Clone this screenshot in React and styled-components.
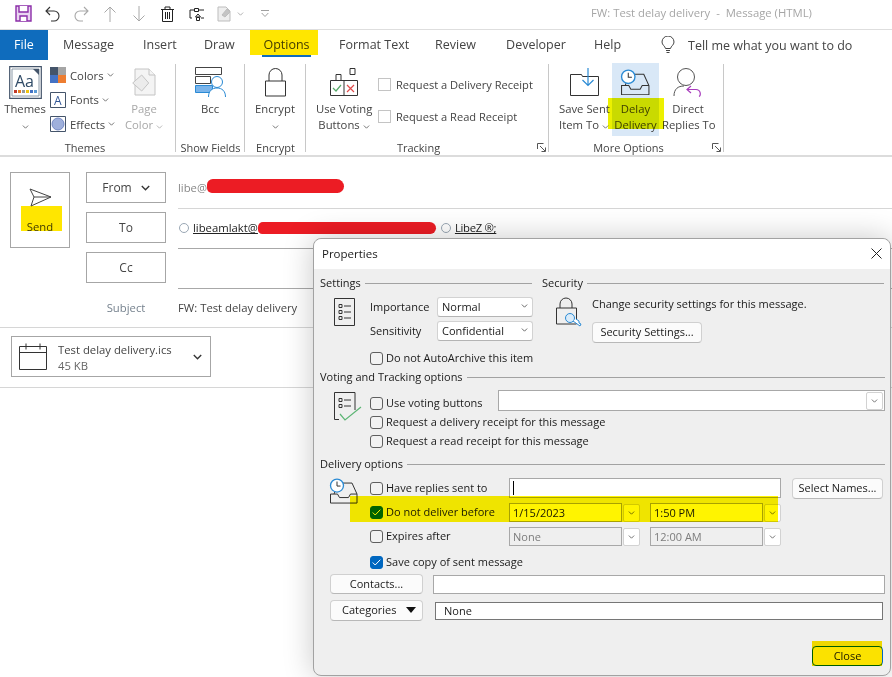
import React from "react";
import styled, { createGlobalStyle } from "styled-components";

const GlobalStyle = createGlobalStyle`
  html, body { margin: 0; padding: 0; background: #fff; }
  * { box-sizing: border-box; }
`;

const Page = styled.div`
  position: relative;
  width: 892px;
  height: 677px;
  overflow: hidden;
  background: #fff;
  color: #444;
  font-family: "Open Sans", "Liberation Sans", sans-serif;
  font-size: 11.3px;
`;

/* title bar */
const QuickBar = styled.div`
  display: flex;
  align-items: center;
  height: 30px;
  padding: 0 0 2px 15px;
  border-bottom: 1px solid #dedede;
`;
const QuickIcon = styled.svg`
  display: block;
  flex: none;
  margin-right: ${(p) => p.$gap || 13}px;
`;
const WindowTitle = styled.div`
  position: absolute;
  left: 591px;
  top: 5px;
  font-size: 11.3px;
  line-height: 16px;
  color: #a6a6a6;
  white-space: pre;
`;

/* tabs */
const TabRow = styled.div`
  display: flex;
  align-items: stretch;
  height: 30px;
  font-size: 12.5px;
`;
const FileTab = styled.div`
  width: 48px;
  margin-right: 14px;
  background: #0f6cbd;
  color: #fff;
  text-align: center;
  line-height: 30px;
`;
const Tab = styled.div`
  position: relative;
  flex: none;
  width: ${(p) => p.$w}px;
  margin-right: ${(p) => p.$gap || 28}px;
  line-height: 30px;
  text-align: center;
  white-space: pre;
  ${(p) =>
    p.$active &&
    `
    &::after {
      content: "";
      position: absolute;
      left: 0;
      right: 0;
      top: 25px;
      height: 2px;
      background: #0f6cbd;
    }
  `}
`;
const TellMe = styled.div`
  display: flex;
  align-items: center;
  gap: 13px;
  margin-left: 12px;
  white-space: pre;
`;

/* ribbon */
const Ribbon = styled.div`
  display: flex;
  height: 97px;
  border-bottom: 2px solid #dcdcdc;
  background: #fff;
`;
const Group = styled.div`
  position: relative;
  flex: none;
  display: flex;
  flex-direction: column;
  width: ${(p) => p.$w}px;
  height: 95px;
  padding-top: 3px;
  padding-right: ${(p) => p.$labelShift || 0}px;
  &::after {
    content: "";
    position: absolute;
    right: 0;
    top: 4px;
    bottom: 3px;
    width: 1px;
    background: #c8c8c8;
  }
`;
const GroupBody = styled.div`
  flex: 1;
  display: flex;
  align-items: flex-start;
  margin-right: -${(p) => p.$shift || 0}px;
`;
const GroupLabel = styled.div`
  height: 14px;
  line-height: 14px;
  text-align: center;
  font-size: 11px;
  white-space: pre;
`;
const Launcher = styled.svg`
  position: absolute;
  right: 3px;
  bottom: 3px;
`;
const BigButton = styled.div`
  flex: none;
  width: ${(p) => p.$w}px;
  height: 73px;
  margin-left: ${(p) => p.$ml || 0}px;
  text-align: center;
  line-height: 15.5px;
  white-space: pre;
  color: ${(p) => (p.$muted ? "#a8a8a8" : "#444")};
  background: ${(p) => (p.$on ? "#d9e8f7" : "transparent")};
`;
const BigIcon = styled.div`
  display: flex;
  align-items: center;
  justify-content: center;
  height: 38px;
`;
const SmallColumn = styled.div`
  flex: none;
  width: 70px;
  padding-top: 3px;
  display: flex;
  flex-direction: column;
  gap: 6.5px;
`;
const SmallRow = styled.div`
  display: flex;
  align-items: center;
  gap: 3px;
  height: 18px;
  white-space: pre;
`;
const SmallIcon = styled.svg`
  flex: none;
  margin-right: 1px;
`;
const ReceiptColumn = styled.div`
  display: flex;
  flex-direction: column;
  gap: 16px;
  margin-left: 6px;
  padding-top: 13px;
`;
const ReceiptRow = styled.div`
  display: flex;
  align-items: center;
  gap: 5px;
  height: 16px;
  white-space: pre;
  font-size: 11.1px;
`;
const GhostBox = styled.span`
  width: 13px;
  height: 13px;
  border: 1px solid #c4c4c4;
`;

/* compose area */
const ComposeTop = styled.div`
  display: flex;
  gap: 16px;
  height: 171px;
  padding: 15px 0 0 10px;
  border-bottom: 1px solid #d6d6d6;
`;
const SendButton = styled.div`
  flex: none;
  display: flex;
  flex-direction: column;
  align-items: center;
  width: 60px;
  height: 76px;
  padding-top: 15px;
  border: 1px solid #a6a6a6;
`;
const SendLabel = styled.div`
  margin-top: 12px;
  line-height: 16px;
`;
const Fields = styled.div`
  flex: 1;
  display: grid;
  grid-template-columns: 80px 1fr;
  grid-auto-rows: 40px;
  column-gap: 12px;
  align-content: start;
`;
const FieldButton = styled.div`
  display: flex;
  align-items: center;
  justify-content: center;
  gap: 9px;
  height: 31px;
  border: 1px solid #a6a6a6;
  font-size: 12px;
`;
const FieldValue = styled.div`
  display: flex;
  align-items: center;
  height: 37px;
  padding-bottom: 5px;
  border-bottom: 1px solid ${(p) => p.$line || "#a8a8a8"};
  white-space: pre;
  color: ${(p) => p.$color || "#444"};
`;
const SubjectLabel = styled.div`
  height: 32px;
  line-height: 32px;
  text-align: center;
  color: #76828e;
`;
const SubjectValue = styled.div`
  height: 32px;
  line-height: 32px;
`;
const Redaction = styled.span`
  flex: none;
  width: ${(p) => p.$w}px;
  height: ${(p) => p.$h}px;
  margin-bottom: ${(p) => p.$lift || 0}px;
  background: #ec1c24;
  border-radius: 7px 9px 8px 6px;
`;
const Presence = styled.span`
  flex: none;
  width: 10px;
  height: 10px;
  margin: 0 4px 0 1px;
  border: 1px solid #9aa7b4;
  border-radius: 50%;
`;
const Person = styled.span`
  color: #222;
  text-decoration: underline;
  letter-spacing: ${(p) => p.$tight ? "-0.3px" : "0"};
`;
const PersonGap = styled.span`
  width: 4px;
`;
const AttachmentBar = styled.div`
  height: 60px;
  padding: 8px 0 0 11px;
  border-bottom: 1px solid #d6d6d6;
`;
const Attachment = styled.div`
  display: flex;
  align-items: center;
  width: 200px;
  height: 41px;
  padding: 0 8px 0 7px;
  border: 1px solid #a6a6a6;
`;
const AttachmentText = styled.div`
  flex: 1;
  margin-left: 11px;
  padding-top: 2px;
  line-height: 16px;
  white-space: pre;
`;
const AttachmentSize = styled.div`
  color: #666;
`;

/* properties dialog */
const Dialog = styled.div`
  position: absolute;
  left: 313px;
  top: 238px;
  width: 578px;
  height: 438px;
  display: flex;
  flex-direction: column;
  border: 1px solid #a2a2a2;
  border-radius: 8px;
  background: #efefef;
  box-shadow: 0 0 30px rgba(0, 0, 0, 0.22);
  color: #1a1a1a;
  font-size: 11px;
`;
const DialogTitle = styled.div`
  display: flex;
  align-items: center;
  justify-content: space-between;
  height: 30px;
  padding: 0 8px 2px;
  border-radius: 8px 8px 0 0;
  background: #fff;
  font-size: 11.5px;
`;
const DialogBody = styled.div`
  flex: 1;
  display: flex;
  flex-direction: column;
  padding: 7px 5px 0 6px;
`;
const TopColumns = styled.div`
  display: flex;
  gap: 10px;
`;
const SettingsColumn = styled.div`
  flex: none;
  width: 212px;
`;
const SecurityColumn = styled.div`
  flex: 1;
  padding-right: 1px;
`;
const Heading = styled.div`
  display: flex;
  align-items: center;
  gap: 4px;
  height: 14px;
  padding-bottom: 2px;
  margin-top: ${(p) => p.$mt || 0}px;
  white-space: pre;
  &::after {
    content: "";
    flex: 1;
    height: 1px;
    margin-top: 2px;
    background: #a2a2a2;
  }
`;
const SettingsBody = styled.div`
  display: flex;
  gap: 15px;
  padding: 7px 0 0 14px;
`;
const SettingsGrid = styled.div`
  display: grid;
  grid-template-columns: 67px 96px;
  grid-auto-rows: 20px;
  row-gap: 4px;
  align-items: center;
`;
const FieldName = styled.div`
  padding-bottom: 2px;
`;
const Select = styled.div`
  display: flex;
  align-items: center;
  justify-content: space-between;
  height: 20px;
  padding: 0 4px 2px;
  border: 1px solid #d2d2d2;
  border-bottom-color: #b4b4b4;
  border-radius: 3px;
  background: #fff;
`;
const CheckRow = styled.div`
  display: flex;
  align-items: center;
  gap: 3px;
  height: ${(p) => p.$h || 16}px;
  width: ${(p) => p.$w || "auto"};
  margin-top: ${(p) => p.$mt || 0}px;
  padding-bottom: 2px;
  flex: none;
  white-space: pre;
`;
const Check = styled.span`
  flex: none;
  display: flex;
  align-items: center;
  justify-content: center;
  width: 13px;
  height: 13px;
  margin-top: 2px;
  border: 1px solid ${(p) => (p.$on ? "#0067c0" : "#5f5f5f")};
  border-radius: 3px;
  background: ${(p) => (p.$on ? "#0067c0" : "#f2f2f2")};
`;
const SecurityBody = styled.div`
  display: flex;
  gap: 10px;
  padding: 7px 0 0 14px;
`;
const SecurityText = styled.div`
  line-height: 14px;
`;
const DialogButton = styled.div`
  display: flex;
  align-items: center;
  justify-content: ${(p) => (p.$between ? "space-between" : "center")};
  flex: none;
  width: ${(p) => p.$w}px;
  height: ${(p) => p.$h || 21}px;
  margin-top: ${(p) => p.$mt || 0}px;
  margin-left: ${(p) => p.$ml || 0}px;
  padding: ${(p) => (p.$between ? "0 6px 2px 11px" : "0 0 2px")};
  border: 1px solid ${(p) => (p.$primary ? "#0067c0" : "#d0d0d0")};
  border-bottom-color: ${(p) => (p.$primary ? "#0067c0" : "#b8b8b8")};
  border-radius: 4px;
  background: #fbfbfb;
  white-space: pre;
`;
const VotingBody = styled.div`
  display: flex;
  padding: 6px 0 0 14px;
`;
const IconSlot = styled.div`
  flex: none;
  width: ${(p) => p.$w}px;
  padding-top: ${(p) => p.$top || 0}px;
`;
const VotingRows = styled.div`
  flex: 1;
  display: flex;
  flex-direction: column;
  gap: 3px;
`;
const FormRow = styled.div`
  display: flex;
  align-items: center;
  height: ${(p) => p.$h || 20}px;
  margin-top: ${(p) => p.$mt || 0}px;
`;
const TextBox = styled.div`
  display: flex;
  align-items: center;
  justify-content: ${(p) => (p.$end ? "flex-end" : "flex-start")};
  flex: ${(p) => (p.$w ? "none" : 1)};
  width: ${(p) => (p.$w ? `${p.$w}px` : "auto")};
  height: ${(p) => p.$h || 20}px;
  margin-left: ${(p) => p.$ml || 0}px;
  padding: 0 ${(p) => p.$pad || 3}px;
  border: 1px solid ${(p) => p.$line || "#a8a8a8"};
  background: ${(p) => (p.$off ? "#efefef" : "#fff")};
  color: ${(p) => (p.$off ? "#7c7c7c" : "#1a1a1a")};
  white-space: pre;
`;
const Caret = styled.span`
  width: 1px;
  height: 14px;
  background: #000;
`;
const DropButton = styled.div`
  display: flex;
  align-items: center;
  justify-content: center;
  flex: none;
  width: 17px;
  height: 18px;
  margin-left: 1px;
  margin-right: ${(p) => p.$mr || 0}px;
  border: 1px solid #d2d2d2;
  border-radius: 2px;
  background: #fff;
`;
const DeliveryBody = styled.div`
  display: flex;
  padding: 7px 0 0 9px;
`;
const DeliveryRows = styled.div`
  flex: 1;
  display: flex;
  flex-direction: column;
`;
const WideRow = styled.div`
  display: flex;
  align-items: center;
  height: ${(p) => p.$h}px;
  margin-top: ${(p) => p.$mt}px;
  padding: 0 ${(p) => p.$pr || 0}px 0 10px;
`;
const DialogFooter = styled.div`
  display: flex;
  justify-content: flex-end;
  padding-right: 2px;
`;

/* marker pen on top of the shot */
const Marker = styled.div`
  position: absolute;
  left: ${(p) => p.$x}px;
  top: ${(p) => p.$y}px;
  width: ${(p) => p.$w}px;
  height: ${(p) => p.$h}px;
  background: ${(p) => p.$color || "#ffe600"};
  mix-blend-mode: multiply;
  pointer-events: none;
`;

const Chevron = ({ w = 7, h = 4, color = "#555", sw = 1 }) => (
  <svg width={w} height={h} viewBox="0 0 8 5" fill="none" style={{ flex: "none" }}>
    <path d="M.7.7 4 4l3.3-3.3" stroke={color} strokeWidth={sw} />
  </svg>
);

const Tick = () => (
  <svg width="9" height="7" viewBox="0 0 9 7" fill="none" stroke="#fff">
    <path d="m.7 3.500 2.500 2.500L8.300.7" />
  </svg>
);

const LauncherIcon = () => (
  <Launcher width="9" height="9" viewBox="0 0 9 9" fill="none" stroke="#555">
    <path d="M.5 6V.5H6.5M3 3l5 5M8.5 4.5v4h-4" />
  </Launcher>
);

const Lamp = () => (
  <svg width="14" height="18" viewBox="0 0 14 18" fill="none" stroke="#444">
    <path d="M4.5 12.5C4 10 1 9 1 6a6 6 0 0 1 12 0c0 3-3 4-3.500 6.500zM5 14.500h4M5.500 16.500h3" />
  </svg>
);

const TrayIcon = ({ size = 30, clock = "#2a8ad4" }) => (
  <svg width={size} height={size * 0.87} viewBox="0 0 30 26" fill="none">
    <path d="M9 5h14l5 11v9H1.500v-9h7l2 3.500h9l2-3.500h6.500M5 16l1.500-4" stroke="#333" />
    <circle cx="8" cy="7.500" r="6.500" fill="#fff" stroke={clock} strokeWidth="1.300" />
    <path d="M8 3.500v4.500h3.500" stroke="#333" />
  </svg>
);

function QuickAccess() {
  return (
    <QuickBar>
      <QuickIcon width="17" height="17" viewBox="0 0 17 17" fill="#e9d5f1" stroke="#8b2da8" strokeWidth="1.400" $gap={13}>
        <path d="M1 1h15v15H1z" />
        <path d="M4 1v6h9V1M5 16v-5h7v5" fill="#fff" />
      </QuickIcon>
      <QuickIcon width="15" height="16" viewBox="0 0 15 16" fill="none" stroke="#333" strokeWidth="1.100" $gap={14}>
        <path d="M5 1 1 5l4 4M1 5h8a5 5 0 0 1 0 10H6" />
      </QuickIcon>
      <QuickIcon width="15" height="16" viewBox="0 0 15 16" fill="none" stroke="#a8a8a8" strokeWidth="1.100" $gap={15}>
        <path d="m10 1 4 4-4 4M14 5H6a5 5 0 0 0 0 10h3" />
      </QuickIcon>
      <QuickIcon width="12" height="16" viewBox="0 0 12 16" fill="none" stroke="#a8a8a8" $gap={17}>
        <path d="M6 16V1M.5 6.500 6 1l5.500 5.500" />
      </QuickIcon>
      <QuickIcon width="12" height="16" viewBox="0 0 12 16" fill="none" stroke="#a8a8a8" $gap={16}>
        <path d="M6 0v15M.5 9.500 6 15l5.500-5.500" />
      </QuickIcon>
      <QuickIcon width="13" height="16" viewBox="0 0 13 16" fill="none" stroke="#222" $gap={15}>
        <path d="M1.500 3.500v12h10v-12M0 3.500h13M4 3V1h5v2M4.500 6v7M6.500 6v7M8.500 6v7" />
      </QuickIcon>
      <QuickIcon width="16" height="14" viewBox="0 0 16 14" fill="none" stroke="#222" $gap={12}>
        <path d="M1 11V3h4M5.500 1.500h4v3h-4zM9.500 3H15M1 11h2M9 7l2.500 3h-5zM7.500 10.500h3v3h-3zM12 11h3" />
      </QuickIcon>
      <QuickIcon width="14" height="16" viewBox="0 0 14 16" fill="#eee" stroke="#bdbdbd" $gap={6}>
        <path d="M1 1h8l4 4v10H1z" />
        <path d="m5 9 5-6 3 3-5 5z" fill="#c4c4c4" />
      </QuickIcon>
      <QuickIcon width="7" height="4" viewBox="0 0 8 5" fill="none" stroke="#a0a0a0" $gap={17}>
        <path d="M.7.7 4 4l3.300-3.300" />
      </QuickIcon>
      <QuickIcon width="8" height="8" viewBox="0 0 8 8" fill="none" stroke="#a0a0a0">
        <path d="M0 .5h8M.7 3 4 6.500 7.300 3" />
      </QuickIcon>
      <WindowTitle>FW: Test delay delivery  -  Message (HTML)</WindowTitle>
    </QuickBar>
  );
}

function Tabs() {
  return (
    <TabRow>
      <FileTab>File</FileTab>
      <Tab $w={53}>Message</Tab>
      <Tab $w={33}>Insert</Tab>
      <Tab $w={30}>Draw</Tab>
      <Tab $w={49} $active>Options</Tab>
      <Tab $w={68}>Format Text</Tab>
      <Tab $w={40} $gap={31}>Review</Tab>
      <Tab $w={60}>Developer</Tab>
      <Tab $w={27}>Help</Tab>
      <TellMe>
        <Lamp />
        Tell me what you want to do
      </TellMe>
    </TabRow>
  );
}

function RibbonBar() {
  return (
    <Ribbon>
      <Group $w={176} $labelShift={6}>
        <GroupBody $shift={6}>
          <BigButton $w={50}>
            <BigIcon>
              <svg width="33" height="33" viewBox="0 0 33 33" fill="#fff">
                <path d="M.7.7h31.600v31.600H.7z" stroke="#44546a" strokeWidth="1.200" />
                <path d="M3 3h27v27H3z" stroke="#8c9aa8" />
                <path d="M24 3h6v6z" fill="#44546a" />
                <text x="6" y="21" fontFamily="Open Sans" fontSize="16" fill="#2f4a66">Aa</text>
                <path d="M5 24h3v3H5z" fill="#c0392b" />
                <path d="M9 24h3v3H9z" fill="#e67e22" />
                <path d="M13 24h3v3h-3z" fill="#999" />
                <path d="M17 24h3v3h-3z" fill="#f1c40f" />
                <path d="M21 24h3v3h-3z" fill="#4472c4" />
                <path d="M25 24h3v3h-3z" fill="#5b9bd5" />
              </svg>
            </BigIcon>
            Themes
            <br />
            <Chevron />
          </BigButton>
          <SmallColumn>
            <SmallRow>
              <SmallIcon width="16" height="16" viewBox="0 0 16 16">
                <path d="M0 0h8v8H0z" fill="#44546a" />
                <path d="M8 0h8v8H8z" fill="#a5a5a5" />
                <path d="M0 8h8v8H0z" fill="#4472c4" />
                <path d="M8 8h8v8H8z" fill="#ed7d31" />
              </SmallIcon>
              Colors
              <Chevron />
            </SmallRow>
            <SmallRow>
              <SmallIcon width="16" height="16" viewBox="0 0 16 16" fill="#fff">
                <path d="M.5.5h15v15H.5z" stroke="#44546a" />
                <text x="4" y="13" fontFamily="Open Sans" fontSize="12" fill="#2f5597">A</text>
              </SmallIcon>
              Fonts
              <Chevron />
            </SmallRow>
            <SmallRow>
              <SmallIcon width="16" height="16" viewBox="0 0 16 16" fill="#fff">
                <path d="M.5.5h15v15H.5z" stroke="#44546a" />
                <circle cx="8" cy="8" r="6" fill="#9fb0dc" stroke="#7388c4" />
              </SmallIcon>
              Effects
              <Chevron />
            </SmallRow>
          </SmallColumn>
          <BigButton $w={48} $muted>
            <BigIcon>
              <svg width="24" height="28" viewBox="0 0 24 28" fill="#f4f4f4" stroke="#c4c4c4">
                <path d="M3 1h14l6 6v20H3z" />
                <path d="M17 1v6h6" />
                <path d="m.7 15 9-8 7 8-7 8z" fill="#ececec" />
              </svg>
            </BigIcon>
            Page
            <br />
            Color <Chevron color="#a8a8a8" />
          </BigButton>
        </GroupBody>
        <GroupLabel>Themes</GroupLabel>
      </Group>

      <Group $w={69}>
        <GroupBody>
          <BigButton $w={68}>
            <BigIcon>
              <svg width="31" height="30" viewBox="0 0 31 30" fill="none" stroke="#444">
                <path d="M.5.5h26v7H.5zM.5 9.500h15v7H.5z" />
                <path d="M.5 18.500h17v7H.5z" fill="#7ab4ea" stroke="#2a8ad4" />
                <circle cx="22" cy="15" r="5.500" fill="#fff" stroke="#2a8ad4" />
                <path d="M13.500 30c0-6 3.500-9 8.500-9s8.500 3 8.500 9" fill="#fff" stroke="#2a8ad4" />
              </svg>
            </BigIcon>
            Bcc
          </BigButton>
        </GroupBody>
        <GroupLabel>Show Fields</GroupLabel>
      </Group>

      <Group $w={61}>
        <GroupBody>
          <BigButton $w={60}>
            <BigIcon>
              <svg width="21" height="29" viewBox="0 0 21 29" fill="none" stroke="#333">
                <path d="M4 13V7a6.500 6.500 0 0 1 13 0v6M.5 13h20v15H.5z" />
              </svg>
            </BigIcon>
            Encrypt
            <br />
            <Chevron />
          </BigButton>
        </GroupBody>
        <GroupLabel>Encrypt</GroupLabel>
      </Group>

      <Group $w={243} $labelShift={18}>
        <GroupBody $shift={18}>
          <BigButton $w={56} $ml={10}>
            <BigIcon>
              <svg width="28" height="28" viewBox="0 0 28 28" fill="none" stroke="#333">
                <path d="M.5 12.500h27v15H.5zM14 12.500v15M6 12.500v-6h5v6M20 6.500v-6h5v6h-5z" />
                <path d="m3 20 3 3 5-6" stroke="#55a868" strokeWidth="1.200" />
                <path d="m17 17 7 7m0-7-7 7" stroke="#e04b4b" strokeWidth="1.200" />
              </svg>
            </BigIcon>
            Use Voting
            <br />
            Buttons <Chevron />
          </BigButton>
          <ReceiptColumn>
            <ReceiptRow>
              <GhostBox />
              Request a Delivery Receipt
            </ReceiptRow>
            <ReceiptRow>
              <GhostBox />
              Request a Read Receipt
            </ReceiptRow>
          </ReceiptColumn>
        </GroupBody>
        <GroupLabel>Tracking</GroupLabel>
        <LauncherIcon />
      </Group>

      <Group $w={175} $labelShift={16}>
        <GroupBody $shift={16}>
          <BigButton $w={50} $ml={10}>
            <BigIcon>
              <svg width="29" height="28" viewBox="0 0 29 28" fill="none">
                <path d="M.5 6.500h11l1 2h16v19H.5z" stroke="#333" fill="#fff" />
                <path d="M18 0v17M12.500 12l5.500 5.500 5.500-5.500" stroke="#2a8ad4" strokeWidth="1.200" />
              </svg>
            </BigIcon>
            Save Sent
            <br />
            Item To <Chevron />
          </BigButton>
          <BigButton $w={47} $ml={3} $on>
            <BigIcon>
              <TrayIcon size={31} />
            </BigIcon>
            Delay
            <br />
            Delivery
          </BigButton>
          <BigButton $w={52} $ml={3}>
            <BigIcon>
              <svg width="30" height="30" viewBox="0 0 30 30" fill="none">
                <circle cx="13" cy="10" r="8.500" stroke="#555" />
                <path d="M1 29c0-7 4-10 10-10" stroke="#555" />
                <path d="m18 19-4 3.500 4 3.500M14 22.500h9c5 0 5 6 3 7" stroke="#a83dbd" strokeWidth="1.200" />
              </svg>
            </BigIcon>
            Direct
            <br />
            Replies To
          </BigButton>
        </GroupBody>
        <GroupLabel>More Options</GroupLabel>
        <LauncherIcon />
      </Group>
    </Ribbon>
  );
}

function Compose() {
  return (
    <>
      <ComposeTop>
        <SendButton>
          <svg width="23" height="19" viewBox="0 0 23 19" fill="none" stroke="#444">
            <path d="M1 1 22 9 2 18l3-9zM5 9h17" />
          </svg>
          <SendLabel>Send</SendLabel>
        </SendButton>
        <Fields>
          <FieldButton>
            From <Chevron w={9} h={6} color="#333" sw={1.200} />
          </FieldButton>
          <FieldValue $line="#d6d6d6" $color="#888">
            libe@<Redaction $w={137} $h={14} $lift={4} />
          </FieldValue>
          <FieldButton>To</FieldButton>
          <FieldValue>
            <Presence />
            <Person>libeamlakt@</Person>
            <Redaction $w={178} $h={12} />
            <PersonGap />
            <Presence />
            <Person $tight>LibeZ ®;</Person>
          </FieldValue>
          <FieldButton>Cc</FieldButton>
          <FieldValue />
          <SubjectLabel>Subject</SubjectLabel>
          <SubjectValue>FW: Test delay delivery</SubjectValue>
        </Fields>
      </ComposeTop>
      <AttachmentBar>
        <Attachment>
          <svg width="28" height="27" viewBox="0 0 28 27" fill="none" stroke="#333">
            <path d="M.5 3.500h27v23H.5zM.5 9.500h27M7 .5v6M21 .5v6" />
          </svg>
          <AttachmentText>
            Test delay delivery.ics
            <AttachmentSize>45 KB</AttachmentSize>
          </AttachmentText>
          <Chevron w={9} h={6} color="#333" sw={1.200} />
        </Attachment>
      </AttachmentBar>
    </>
  );
}

function PropertiesDialog() {
  return (
    <Dialog>
      <DialogTitle>
        Properties
        <svg width="11" height="11" viewBox="0 0 11 11" fill="none" stroke="#222">
          <path d="m.5.5 10 10m0-10-10 10" />
        </svg>
      </DialogTitle>
      <DialogBody>
        <TopColumns>
          <SettingsColumn>
            <Heading>Settings</Heading>
            <SettingsBody>
              <IconSlot $w={21} $top={1}>
                <svg width="21" height="28" viewBox="0 0 21 28" fill="none" stroke="#333">
                  <path d="M.5.5h20v27H.5zM5 6.500h3v3H5zM5 12.500h3v3H5zM5 18.500h3v3H5zM10 8h7M10 14h7M10 20h7" />
                </svg>
              </IconSlot>
              <div>
                <SettingsGrid>
                  <FieldName>Importance</FieldName>
                  <Select>
                    Normal
                    <Chevron color="#444" />
                  </Select>
                  <FieldName>Sensitivity</FieldName>
                  <Select>
                    Confidential
                    <Chevron color="#444" />
                  </Select>
                </SettingsGrid>
                <CheckRow $mt={9}>
                  <Check />
                  Do not AutoArchive this item
                </CheckRow>
              </div>
            </SettingsBody>
          </SettingsColumn>
          <SecurityColumn>
            <Heading>Security</Heading>
            <SecurityBody>
              <IconSlot $w={26}>
                <svg width="26" height="30" viewBox="0 0 26 30" fill="none">
                  <path d="M4 11V7a6 6 0 0 1 12 0v4M.5 11h20v16H.5z" stroke="#333" />
                  <circle cx="14" cy="21" r="4.500" fill="#d9ebf9" stroke="#2a8ad4" />
                  <path d="m17 24 7 5 1-2-2-1v-2l-3-2" fill="#fff" stroke="#2a8ad4" />
                </svg>
              </IconSlot>
              <div>
                <SecurityText>Change security settings for this message.</SecurityText>
                <DialogButton $w={110} $mt={11}>Security Settings...</DialogButton>
              </div>
            </SecurityBody>
          </SecurityColumn>
        </TopColumns>

        <Heading $mt={4}>Voting and Tracking options</Heading>
        <VotingBody>
          <IconSlot $w={36} $top={2}>
            <svg width="28" height="30" viewBox="0 0 28 30" fill="none">
              <path d="M21 18V.5H.5v27H5" stroke="#333" />
              <path d="M5 6.500h3v3H5zM5 12.500h3v3H5zM10 8h7M10 14h7" stroke="#333" />
              <path d="m6 22 5 6L27 15" stroke="#5cb574" strokeWidth="1.200" />
            </svg>
          </IconSlot>
          <VotingRows>
            <FormRow $h={21}>
              <CheckRow $w="128px" $mt={6}>
                <Check />
                Use voting buttons
              </CheckRow>
              <TextBox $h={21} $pad={1} $end>
                <DropButton>
                  <Chevron color="#555" />
                </DropButton>
              </TextBox>
            </FormRow>
            <CheckRow>
              <Check />
              Request a delivery receipt for this message
            </CheckRow>
            <CheckRow>
              <Check />
              Request a read receipt for this message
            </CheckRow>
          </VotingRows>
        </VotingBody>

        <Heading $mt={8}>Delivery options</Heading>
        <DeliveryBody>
          <IconSlot $w={41}>
            <TrayIcon size={30} />
          </IconSlot>
          <DeliveryRows>
            <FormRow>
              <CheckRow $w="139px">
                <Check />
                Have replies sent to
              </CheckRow>
              <TextBox $w={272}>
                <Caret />
              </TextBox>
              <DialogButton $w={91} $ml={11}>Select Names...</DialogButton>
            </FormRow>
            <FormRow $mt={5} $h={19}>
              <CheckRow $w="139px">
                <Check $on>
                  <Tick />
                </Check>
                Do not deliver before
              </CheckRow>
              <TextBox $w={113} $h={19}>1/15/2023</TextBox>
              <DropButton $mr={10}>
                <Chevron color="#555" />
              </DropButton>
              <TextBox $w={113} $h={19}>1:50 PM</TextBox>
              <DropButton>
                <Chevron color="#555" />
              </DropButton>
            </FormRow>
            <FormRow $mt={5} $h={19}>
              <CheckRow $w="139px">
                <Check />
                Expires after
              </CheckRow>
              <TextBox $w={113} $h={19} $off>None</TextBox>
              <DropButton $mr={10}>
                <Chevron color="#555" />
              </DropButton>
              <TextBox $w={113} $h={19} $off>12:00 AM</TextBox>
              <DropButton>
                <Chevron color="#555" />
              </DropButton>
            </FormRow>
            <CheckRow $mt={8}>
              <Check $on>
                <Tick />
              </Check>
              Save copy of sent message
            </CheckRow>
          </DeliveryRows>
        </DeliveryBody>
        <WideRow $h={20} $mt={4}>
          <DialogButton $w={93} $h={20}>Contacts...</DialogButton>
          <TextBox $h={19} $ml={10} />
        </WideRow>
        <WideRow $h={21} $mt={6} $pr={2}>
          <DialogButton $w={93} $between>
            <span>
              Cate<u>g</u>ories
            </span>
            <svg width="10" height="6" viewBox="0 0 10 6">
              <path d="M0 0h10L5 6z" fill="#111" />
            </svg>
          </DialogButton>
          <TextBox $h={18} $line="#767676" $pad={8} $ml={12}>None</TextBox>
        </WideRow>
        <DialogFooter>
          <DialogButton $w={71} $h={20} $mt={25} $primary>Close</DialogButton>
        </DialogFooter>
      </DialogBody>
    </Dialog>
  );
}

export default function App() {
  return (
    <Page>
      <GlobalStyle />
      <QuickAccess />
      <Tabs />
      <RibbonBar />
      <Compose />
      <PropertiesDialog />
      <Marker $x={250} $y={30} $w={68} $h={25} />
      <Marker $x={21} $y={206} $w={41} $h={25} />
      <Marker $x={608} $y={98} $w={56} $h={31} $color="#ecf000" />
      <Marker $x={350} $y={496} $w={428} $h={26} $color="#fff400" />
      <Marker $x={812} $y={641} $w={70} $h={25} />
    </Page>
  );
}
